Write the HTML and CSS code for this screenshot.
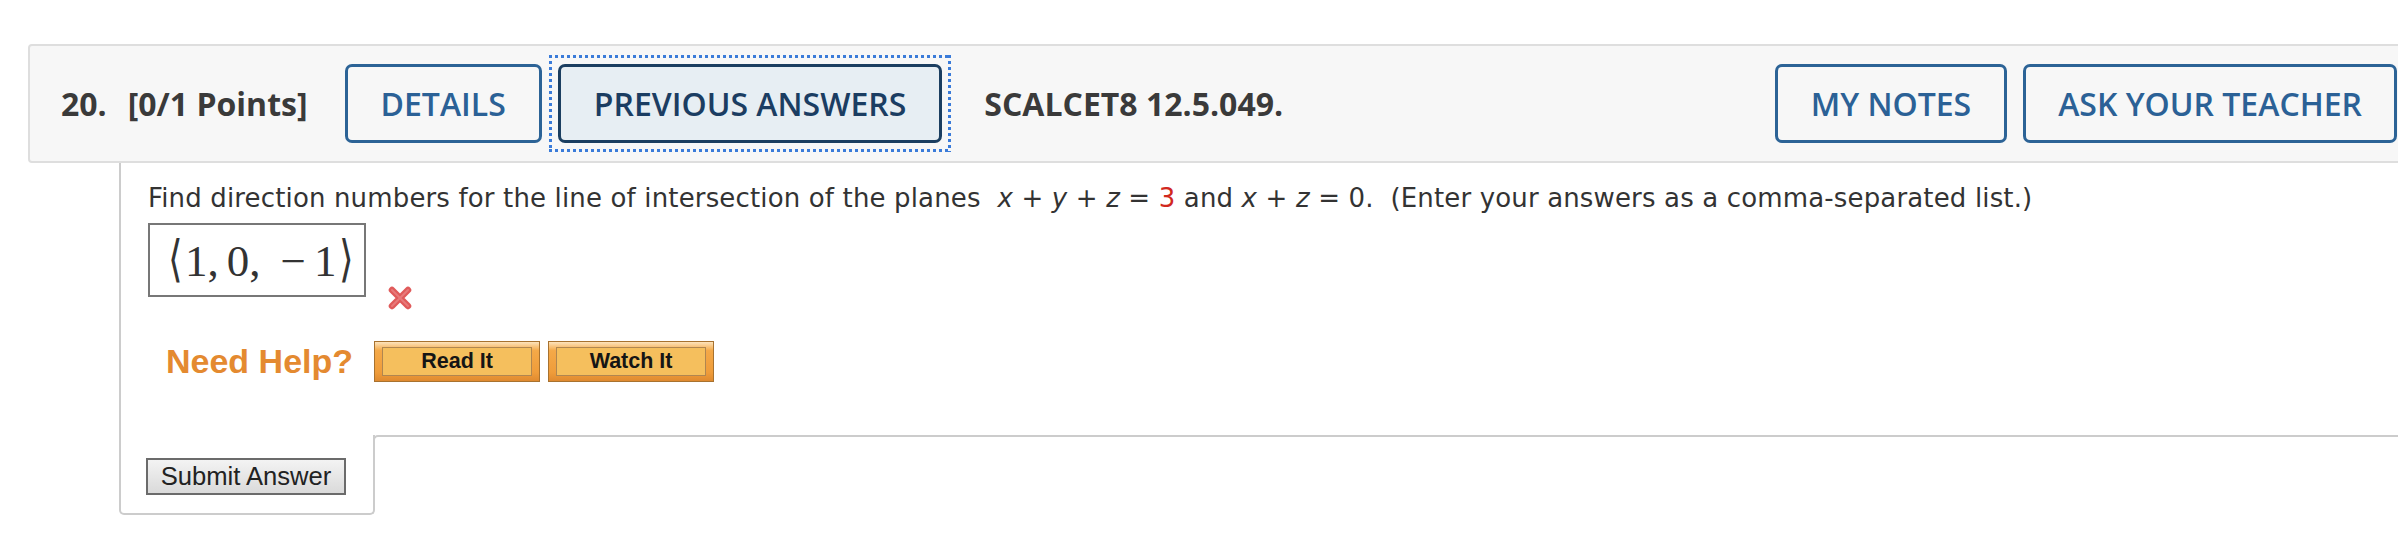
FILE: index.html
```html
<!DOCTYPE html>
<html lang="en">
<head>
<meta charset="utf-8">
<title>Question 20</title>
<link rel="stylesheet" href="styles.css">
</head>
<body>
<div class="page">
  <div class="header">
    <span class="qnum">20.</span>
    <span class="points">[0/1 Points]</span>
    <button class="hbtn details">DETAILS</button>
    <button class="hbtn prev">PREVIOUS ANSWERS</button>
    <span class="qref">SCALCET8 12.5.049.</span>
    <span class="spacer"></span>
    <button class="hbtn notes">MY NOTES</button>
    <button class="hbtn ask">ASK YOUR TEACHER</button>
  </div>
  <div class="question">
    <p class="prompt">Find direction numbers for the line of intersection of the planes&nbsp; <i>x</i> + <i>y</i> + <i>z</i> = <span class="red">3</span> and <i>x</i> + <i>z</i> = 0.&nbsp; (Enter your answers as a comma-separated list.)</p>
    <div class="answer-row">
      <div class="answer-box"><span class="math"><span class="br">⟨</span>1,<span class="thin"></span>0,<span class="wide"></span>−<span class="thin"></span>1<span class="br">⟩</span></span></div>
      <svg class="wrong" width="28" height="26" viewBox="0 0 28 26" aria-label="incorrect">
        <path d="M6 5 L22 21 M22 5 L6 21" stroke="#e05a5a" stroke-width="6.5" stroke-linecap="round" fill="none"/>
        <path d="M6 5 L22 21 M22 5 L6 21" stroke="#f09a9a" stroke-width="2" stroke-linecap="round" fill="none" opacity="0.5"/>
      </svg>
    </div>
    <div class="help">
      <span class="need">Need Help?</span>
      <button class="helpbtn"><span class="helpin">Read It</span></button>
      <button class="helpbtn"><span class="helpin">Watch It</span></button>
    </div>
  </div>
  <div class="footer">
    <div class="submit-cell"><button class="submit">Submit Answer</button></div>
    <div class="rest"></div>
  </div>
</div>
</body>
</html>
```
FILE: styles.css
```css
html, body {
  margin: 0;
  padding: 0;
  overflow: hidden;
  background: #ffffff;
}
.page {
  padding: 44px 0 0 28px;
}
.header {
  display: flex;
  align-items: center;
  box-sizing: border-box;
  height: 119px;
  margin-right: -32px;
  padding: 0 31px 0 31px;
  background: #f7f7f7;
  border: 2px solid #dedede;
  border-radius: 4px;
  font-family: "Open Sans", "Liberation Sans", sans-serif;
  font-size: 32px;
  color: #3a3a3a;
}
.qnum, .points, .qref {
  font-weight: 700;
  white-space: nowrap;
}
.points {
  margin-left: 21px;
  margin-right: 37px;
}
.qref {
  margin-left: 42px;
}
.spacer {
  flex: 1;
}
.hbtn {
  box-sizing: border-box;
  height: 79px;
  padding: 0 33px;
  border: 3px solid #2c6396;
  border-radius: 7px;
  background: transparent;
  color: #2b6196;
  font-family: "Open Sans", "Liberation Sans", sans-serif;
  font-size: 32px;
  font-weight: 600;
  white-space: nowrap;
}
.prev {
  position: relative;
  margin-left: 16px;
  border-color: #1b3e60;
  background: #e7eef3;
  color: #1b3d62;
}
.prev::after {
  content: "";
  position: absolute;
  top: -12px;
  left: -12px;
  right: -12px;
  bottom: -12px;
  pointer-events: none;
  background:
    repeating-linear-gradient(90deg, #3a7bd9 0 3px, transparent 3px 6px) top left / 100% 3px no-repeat,
    repeating-linear-gradient(90deg, #3a7bd9 0 3px, transparent 3px 6px) bottom left / 100% 3px no-repeat,
    repeating-linear-gradient(180deg, #3a7bd9 0 3px, transparent 3px 6px) top left / 3px 100% no-repeat,
    repeating-linear-gradient(180deg, #3a7bd9 0 3px, transparent 3px 6px) top right / 3px 100% no-repeat;
}
.ask {
  margin-left: 16px;
  padding: 0 32px;
}
.question {
  margin-left: 91px;
  border-left: 2px solid #cccccc;
  padding: 19px 0 53px 27px;
}
.prompt {
  margin: 0;
  font-family: "DejaVu Sans", Verdana, sans-serif;
  font-size: 26px;
  letter-spacing: 0.15px;
  line-height: 32px;
  color: #333333;
  white-space: nowrap;
}
.red {
  color: #d1281e;
}
.answer-row {
  display: flex;
  align-items: flex-end;
  margin-top: 9px;
}
.answer-box {
  box-sizing: border-box;
  width: 218px;
  height: 74px;
  border: 2px solid #777777;
  display: flex;
  align-items: center;
  padding-left: 15px;
}
.math {
  font-family: "Liberation Serif", "DejaVu Serif", serif;
  font-size: 45px;
  color: #333333;
  white-space: nowrap;
}
.br {
  font-family: "DejaVu Sans", "Liberation Serif", serif;
  font-weight: 200;
  font-size: 1.12em;
  display: inline-block;
  transform: scaleX(0.75);
  line-height: 1;
}
.thin {
  display: inline-block;
  width: 8px;
}
.wide {
  display: inline-block;
  width: 20px;
}
.wrong {
  margin-left: 20px;
  margin-bottom: -14px;
}
.help {
  display: flex;
  align-items: center;
  margin-top: 44px;
  margin-left: 18px;
}
.need {
  font-family: "Liberation Sans", Arial, sans-serif;
  font-weight: 700;
  font-size: 34px;
  color: #e48a30;
  margin-right: 21px;
}
.helpbtn {
  box-sizing: border-box;
  width: 166px;
  height: 41px;
  padding: 5px 7px;
  margin-right: 8px;
  border: 1px solid #a8722f;
  background: linear-gradient(#fde3bb 0%, #f4a948 22%, #ef9c3a 78%, #df8a30 100%);
}
.helpin {
  display: flex;
  height: 100%;
  box-sizing: border-box;
  align-items: center;
  justify-content: center;
  border: 1px solid #b08650;
  background: #f5bf5d;
  font-family: "Liberation Sans", Arial, sans-serif;
  font-weight: 700;
  font-size: 21.5px;
  color: #151515;
}
.footer {
  display: flex;
  margin-left: 91px;
}
.submit-cell {
  box-sizing: border-box;
  width: 256px;
  height: 80px;
  border: 2px solid #cccccc;
  border-top: none;
  border-radius: 0 0 5px 5px;
  padding: 23px 0 0 25px;
}
.submit {
  box-sizing: border-box;
  width: 200px;
  height: 37px;
  padding: 0;
  border: 2px solid #6b6b6b;
  background: linear-gradient(#f3f3f3, #dadada);
  font-family: "Liberation Sans", Arial, sans-serif;
  font-size: 25.6px;
  color: #222222;
}
.rest {
  flex: 1;
  height: 16px;
  margin-left: -2px;
  border-top: 2px solid #cccccc;
  border-left: 2px solid #cccccc;
  border-top-left-radius: 5px;
}
```
